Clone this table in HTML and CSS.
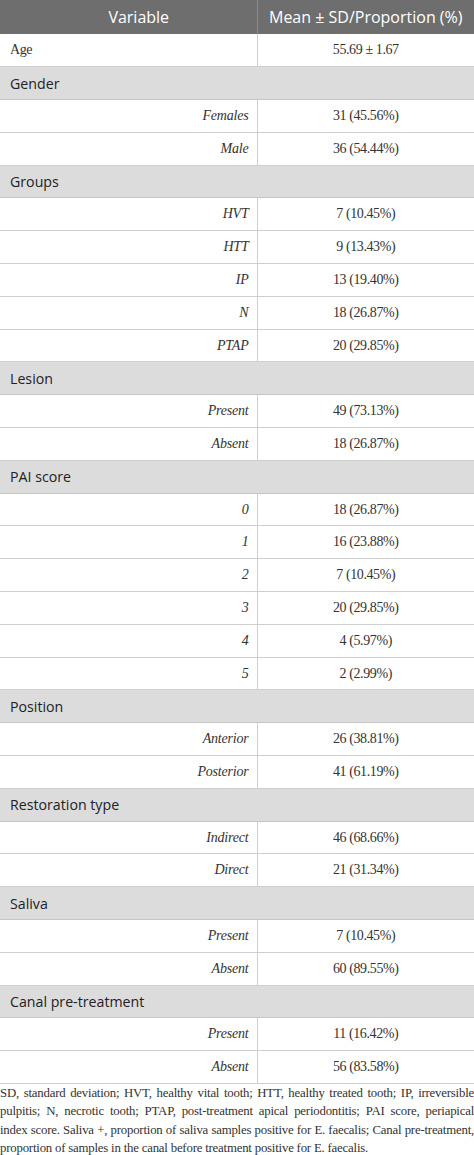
FILE: index.html
```html
<!DOCTYPE html>
<html>
<head>
<meta charset="utf-8">
<link rel="stylesheet" href="styles.css">
</head>
<body>
<table class="tbl">
  <thead>
    <tr><th class="c1">Variable</th><th class="c2">Mean ± SD/Proportion (%)</th></tr>
  </thead>
  <tbody>
    <tr><td class="lab">Age</td><td class="val">55.69 ± 1.67</td></tr>
    <tr class="sec"><td colspan="2">Gender</td></tr>
    <tr><td class="sub">Females</td><td class="val">31 (45.56%)</td></tr>
    <tr><td class="sub">Male</td><td class="val">36 (54.44%)</td></tr>
    <tr class="sec"><td colspan="2">Groups</td></tr>
    <tr><td class="sub">HVT</td><td class="val">7 (10.45%)</td></tr>
    <tr><td class="sub">HTT</td><td class="val">9 (13.43%)</td></tr>
    <tr><td class="sub">IP</td><td class="val">13 (19.40%)</td></tr>
    <tr><td class="sub">N</td><td class="val">18 (26.87%)</td></tr>
    <tr><td class="sub">PTAP</td><td class="val">20 (29.85%)</td></tr>
    <tr class="sec"><td colspan="2">Lesion</td></tr>
    <tr><td class="sub">Present</td><td class="val">49 (73.13%)</td></tr>
    <tr><td class="sub">Absent</td><td class="val">18 (26.87%)</td></tr>
    <tr class="sec"><td colspan="2">PAI score</td></tr>
    <tr><td class="sub">0</td><td class="val">18 (26.87%)</td></tr>
    <tr><td class="sub">1</td><td class="val">16 (23.88%)</td></tr>
    <tr><td class="sub">2</td><td class="val">7 (10.45%)</td></tr>
    <tr><td class="sub">3</td><td class="val">20 (29.85%)</td></tr>
    <tr><td class="sub">4</td><td class="val">4 (5.97%)</td></tr>
    <tr><td class="sub">5</td><td class="val">2 (2.99%)</td></tr>
    <tr class="sec"><td colspan="2">Position</td></tr>
    <tr><td class="sub">Anterior</td><td class="val">26 (38.81%)</td></tr>
    <tr><td class="sub">Posterior</td><td class="val">41 (61.19%)</td></tr>
    <tr class="sec"><td colspan="2">Restoration type</td></tr>
    <tr><td class="sub">Indirect</td><td class="val">46 (68.66%)</td></tr>
    <tr><td class="sub">Direct</td><td class="val">21 (31.34%)</td></tr>
    <tr class="sec"><td colspan="2">Saliva</td></tr>
    <tr><td class="sub">Present</td><td class="val">7 (10.45%)</td></tr>
    <tr><td class="sub">Absent</td><td class="val">60 (89.55%)</td></tr>
    <tr class="sec"><td colspan="2">Canal pre-treatment</td></tr>
    <tr><td class="sub">Present</td><td class="val">11 (16.42%)</td></tr>
    <tr><td class="sub">Absent</td><td class="val">56 (83.58%)</td></tr>
  </tbody>
</table>
<p class="note">SD, standard deviation; HVT, healthy vital tooth; HTT, healthy treated tooth; IP, irreversible pulpitis; N, necrotic tooth; PTAP, post-treatment apical periodontitis; PAI score, periapical index score. Saliva +, proportion of saliva samples positive for E. faecalis; Canal pre-treatment, proportion of samples in the canal before treatment positive for E. faecalis.</p>
</body>
</html>
```

FILE: styles.css
```css
html, body {
  margin: 0;
  padding: 0;
  background: #ffffff;
}
body {
  width: 474px;
  overflow: hidden;
}
.tbl {
  width: 474px;
  border-collapse: collapse;
  table-layout: fixed;
  font-family: "Liberation Serif", "DejaVu Serif", serif;
  font-size: 14px;
  letter-spacing: -0.4px;
  color: #333333;
}
.tbl th {
  background: #6e6e6e;
  color: #ffffff;
  font-family: "Open Sans", "Noto Sans", sans-serif;
  font-weight: normal;
  font-size: 16px;
  letter-spacing: 0;
  height: 34px;
  padding: 0 6px;
  text-align: center;
  box-sizing: border-box;
}
.tbl th.c1 {
  width: 257px;
  padding: 0 6px 0 27px;
  border-right: 1px solid #8a8a8a;
}
.tbl td {
  height: 32.8px;
  padding: 0 8px 0 10px;
  border-bottom: 1px solid #cfcfcf;
  box-sizing: border-box;
  vertical-align: middle;
}
.tbl td.lab {
  text-align: left;
  border-right: 1px solid #cfcfcf;
}
.tbl td.sub {
  text-align: right;
  font-style: italic;
  letter-spacing: -0.2px;
  border-right: 1px solid #cfcfcf;
}
.tbl td.val {
  text-align: center;
  padding: 0 4px;
}
.tbl tr.sec td {
  background: #dcdcdc;
  font-family: "Open Sans", "Noto Sans", sans-serif;
  font-size: 14.2px;
  letter-spacing: 0;
  color: #222222;
  text-align: left;
  border-bottom: 1px solid #c6c6c6;
  border-top: 1px solid #c6c6c6;
}
.note {
  margin: 0;
  padding: 0;
  width: 474px;
  font-family: "Liberation Serif", "DejaVu Serif", serif;
  font-size: 12.8px;
  letter-spacing: -0.2px;
  line-height: 18.3px;
  color: #333333;
  text-align: justify;
}
```
